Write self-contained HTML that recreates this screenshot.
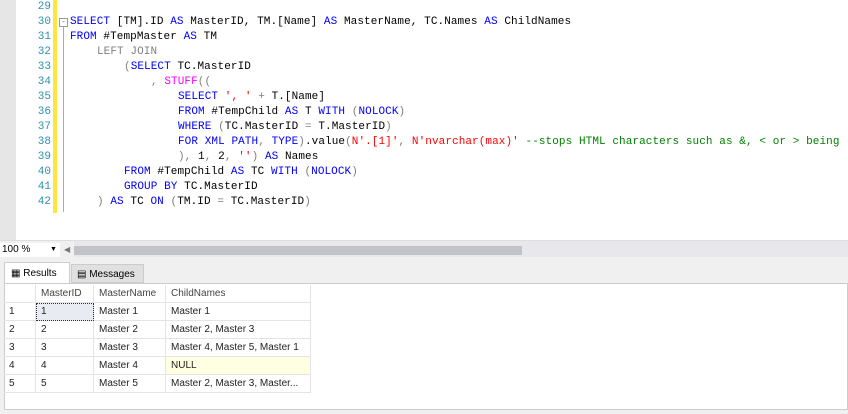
<!DOCTYPE html>
<html><head><style>
body{margin:0;width:848px;height:414px;overflow:hidden;background:#fff;font-family:"Liberation Sans",sans-serif;position:relative}
.gut{position:absolute;left:0;top:0;width:16px;height:240px;background:#e6e6e6}
.yb{position:absolute;left:53px;top:0;width:4px;height:213px;background:#fce83c}
.ln{position:absolute;left:18px;width:33px;text-align:right;font:11px "Liberation Mono",monospace;color:#2b91af;line-height:15px}
.c{position:absolute;white-space:pre;font:11px "Liberation Mono",monospace;letter-spacing:0.08px;line-height:15px;color:#000}
.k{color:#0000ff}.g{color:#808080}.p{color:#ff00ff}.r{color:#ff0000}.m{color:#008000}
.box{position:absolute;left:59px;top:18px;width:7px;height:7px;border:1px solid #999;font:8px monospace;line-height:6px;text-align:center;color:#555;background:#fff}
.vl{position:absolute;left:63px;top:27px;width:1px;height:185px;background:#aaa}
.sep{position:absolute;left:0;top:240px;width:848px;height:1px;background:#ddd}
.bot{position:absolute;left:0;top:241px;width:848px;height:173px;background:#f0f0f0}
.zoom{position:absolute;left:0;top:243px;width:60px;height:14px;background:#fff;font-size:10px;line-height:14px;padding-left:2px;box-sizing:border-box}
.sb{position:absolute;left:74px;top:241px;width:774px;height:16px;background:#e8e8ec}
.th{position:absolute;left:74px;top:246px;width:448px;height:9px;background:#c2c3c9}
.tab{position:absolute;top:262px;height:21px;font-size:10px;line-height:21px;box-sizing:border-box}
.grid{position:absolute;left:4px;top:283px;width:844px;height:127px;background:#fff;border:1px solid #ccc;box-sizing:border-box}
table{position:absolute;left:4px;top:285px;border-collapse:collapse;font-size:10px}
td{height:17px;padding:0 0 0 5px;border-right:1px solid #e4e4e4;border-bottom:1px solid #e4e4e4;color:#222;white-space:nowrap}
tr.h td{color:#444}
</style></head><body>
<div class="gut"></div>
<div class="ln" style="top:0">29<br>30<br>31<br>32<br>33<br>34<br>35<br>36<br>37<br>38<br>39<br>40<br>41<br>42</div>
<div class="yb"></div>
<div class="box">-</div><div class="vl"></div>
<div class="c" style="left:70px;top:15px"><span class="k">SELECT</span> [TM].ID <span class="k">AS</span> MasterID, TM.[Name] <span class="k">AS</span> MasterName, TC.Names <span class="k">AS</span> ChildNames</div>
<div class="c" style="left:70px;top:30px"><span class="k">FROM</span> #TempMaster <span class="k">AS</span> TM</div>
<div class="c g" style="left:97px;top:45px">LEFT JOIN</div>
<div class="c" style="left:124px;top:60px"><span class="g">(</span><span class="k">SELECT</span> TC.MasterID</div>
<div class="c" style="left:151px;top:75px"><span class="g">,</span> <span class="p">STUFF</span><span class="g">((</span></div>
<div class="c" style="left:178px;top:90px"><span class="k">SELECT</span> <span class="r">', '</span> <span class="g">+</span> T.[Name]</div>
<div class="c" style="left:178px;top:105px"><span class="k">FROM</span> #TempChild <span class="k">AS</span> T <span class="k">WITH</span> <span class="g">(</span><span class="k">NOLOCK</span><span class="g">)</span></div>
<div class="c" style="left:178px;top:120px"><span class="k">WHERE</span> <span class="g">(</span>TC.MasterID <span class="g">=</span> T.MasterID<span class="g">)</span></div>
<div class="c" style="left:178px;top:135px"><span class="k">FOR XML PATH</span><span class="g">,</span> <span class="k">TYPE</span><span class="g">)</span>.value<span class="g">(</span><span class="r">N'.[1]'</span><span class="g">,</span> <span class="r">N'nvarchar(max)'</span> <span class="m">--stops HTML characters such as &amp;, &lt; or &gt; being</span></div>
<div class="c" style="left:178px;top:150px"><span class="g">),</span> 1<span class="g">,</span> 2<span class="g">,</span> <span class="r">''</span><span class="g">)</span> <span class="k">AS</span> Names</div>
<div class="c" style="left:124px;top:165px"><span class="k">FROM</span> #TempChild <span class="k">AS</span> TC <span class="k">WITH</span> <span class="g">(</span><span class="k">NOLOCK</span><span class="g">)</span></div>
<div class="c" style="left:124px;top:180px"><span class="k">GROUP BY</span> TC.MasterID</div>
<div class="c" style="left:97px;top:195px"><span class="g">)</span> <span class="k">AS</span> TC <span class="k">ON</span> <span class="g">(</span>TM.ID <span class="g">=</span> TC.MasterID<span class="g">)</span></div>
<div class="sep"></div>
<div class="bot"></div>
<div class="zoom">100 % <span style="position:absolute;left:50px;font-size:7px">▼</span></div>
<div class="sb"></div><div class="th"></div>
<div style="position:absolute;left:64px;top:245px;font-size:8px;color:#777">◀</div>
<div class="tab" style="left:4px;width:66px;background:#fff;border:1px solid #ccc;border-bottom:none;padding-left:6px">▦ Results</div>
<div class="tab" style="left:71px;width:73px;background:#e0e0e0;border:1px solid #ccc;padding-left:5px;top:264px;height:19px;line-height:19px">▤ Messages</div>
<div class="grid"></div>
<table>
<tr class="h"><td style="width:26px"></td><td style="width:52px">MasterID</td><td style="width:66px">MasterName</td><td style="width:139px">ChildNames</td></tr>
<tr><td>1</td><td style="background:#e8ecf2;outline:1px dotted #333;outline-offset:-1px">1</td><td>Master 1</td><td>Master 1</td></tr>
<tr><td>2</td><td>2</td><td>Master 2</td><td>Master 2, Master 3</td></tr>
<tr><td>3</td><td>3</td><td>Master 3</td><td>Master 4, Master 5, Master 1</td></tr>
<tr><td>4</td><td>4</td><td>Master 4</td><td style="background:#ffffe1">NULL</td></tr>
<tr><td>5</td><td>5</td><td>Master 5</td><td>Master 2, Master 3, Master...</td></tr>
</table>
</body></html>
